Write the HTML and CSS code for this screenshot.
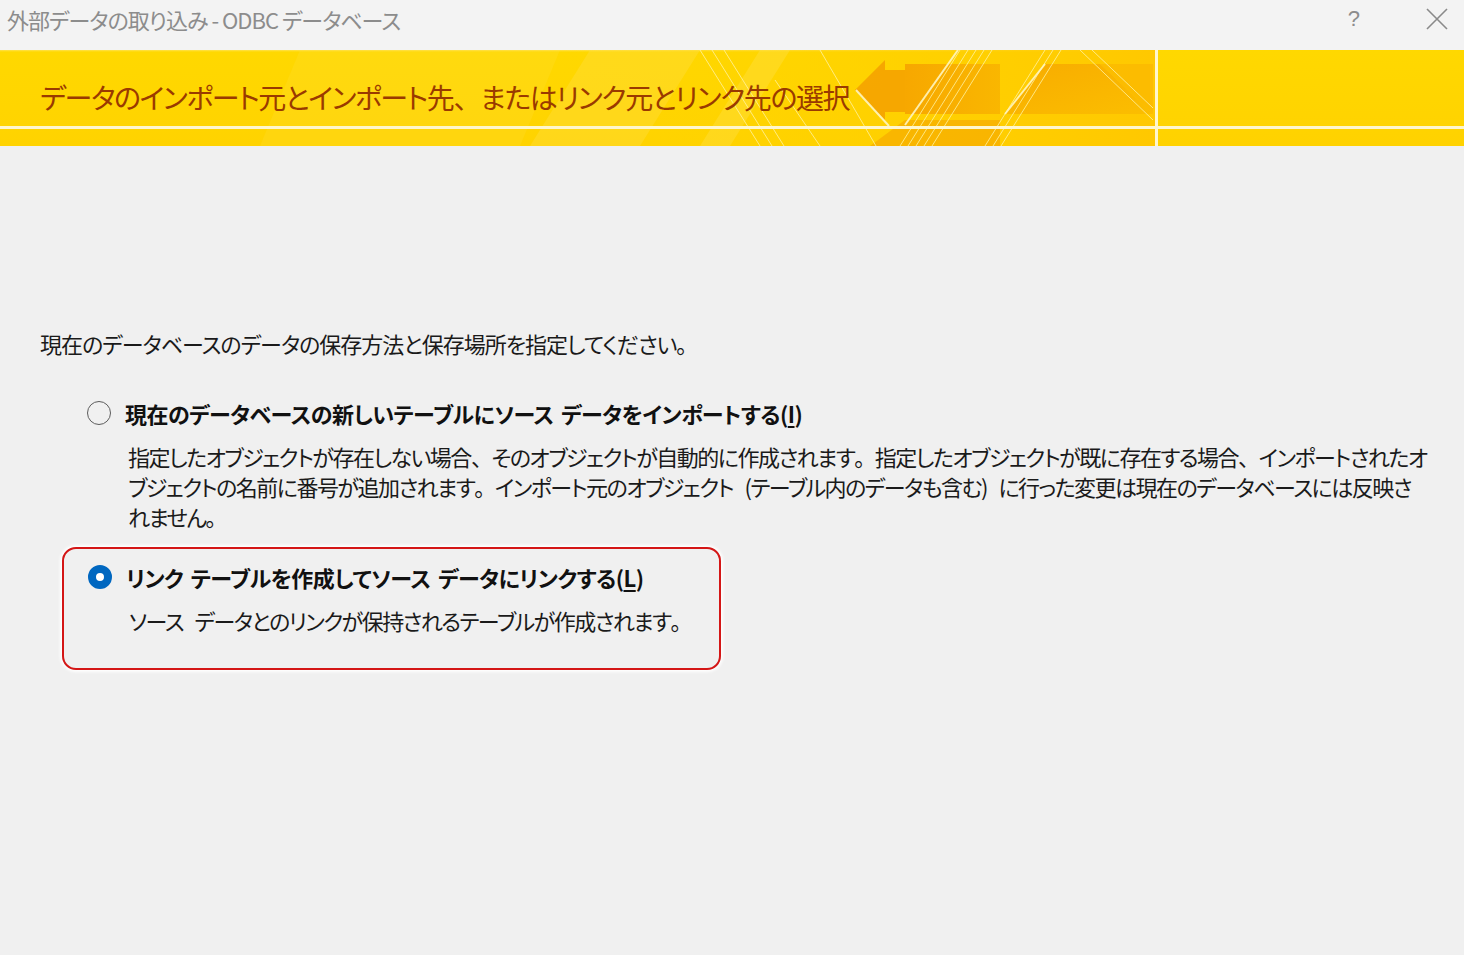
FILE: index.html
```html
<!DOCTYPE html>
<html lang="ja">
<head>
<meta charset="utf-8">
<title>外部データの取り込み - ODBC データベース</title>
<link rel="stylesheet" href="styles.css">
</head>
<body>
<div class="window">
  <header class="titlebar">
    <div class="title">外部データの取り込み - ODBC データベース</div>
    <div class="controls">
      <span class="help">?</span>
      <svg class="close" width="22" height="22" viewBox="0 0 22 22"><path d="M1 1 L21 21 M21 1 L1 21" stroke="#8a8a8a" stroke-width="1.6" fill="none"/></svg>
    </div>
  </header>

  <section class="banner">
    <div class="banner-main">
      <svg class="banner-deco" width="1155" height="96" viewBox="0 0 1155 96" preserveAspectRatio="none">
        <defs>
          <linearGradient id="og" x1="0" y1="0" x2="1" y2="0">
            <stop offset="0" stop-color="#f6a300"/>
            <stop offset="1" stop-color="#f9b400"/>
          </linearGradient>
          <linearGradient id="og2" x1="0" y1="0" x2="1" y2="1">
            <stop offset="0" stop-color="#f7a800"/>
            <stop offset="1" stop-color="#fbbd00"/>
          </linearGradient>
          <linearGradient id="fade" x1="0" y1="0" x2="1" y2="0">
            <stop offset="0" stop-color="#ffd500" stop-opacity="0"/>
            <stop offset="1" stop-color="#ffc800" stop-opacity="1"/>
          </linearGradient>
        </defs>
        <rect x="560" y="0" width="595" height="96" fill="url(#fade)"/>
        <polygon points="590,0 700,0 640,96 530,96" fill="#ffe04a" opacity="0.35"/>
        <polygon points="700,96 760,0 790,0 730,96" fill="#ffe55c" opacity="0.3"/>
        <polygon points="855,40 885,10 885,20 905,20 905,62 885,62 885,70" fill="#f5a000" opacity="0.85"/>
        <polygon points="905,14 1000,14 1000,64 905,64" fill="url(#og)" opacity="0.9"/>
        <polygon points="1005,64 1045,14 1100,14 1153,64" fill="url(#og2)" opacity="0.9"/>
        <polygon points="1100,14 1153,14 1153,64" fill="#fbb900" opacity="0.8"/>
        <polygon points="870,96 905,70 1000,70 1000,96" fill="#f7ab00" opacity="0.7"/>
        <polygon points="300,0 560,0 520,96 260,96" fill="#ffe34d" opacity="0.18"/>
        <g stroke="#fff3a0" stroke-width="1" opacity="0.8" fill="none">
          <line x1="700" y1="0" x2="760" y2="96"/>
          <line x1="712" y1="0" x2="772" y2="96"/>
          <line x1="724" y1="0" x2="784" y2="96"/>
          <line x1="775" y1="30" x2="820" y2="96"/>
          <line x1="820" y1="0" x2="876" y2="96"/>
          <line x1="960" y1="0" x2="900" y2="96"/>
          <line x1="968" y1="0" x2="908" y2="96"/>
          <line x1="976" y1="0" x2="916" y2="96"/>
          <line x1="984" y1="0" x2="924" y2="96"/>
          <line x1="992" y1="0" x2="932" y2="96"/>
          <line x1="1045" y1="0" x2="985" y2="96"/>
          <line x1="1053" y1="0" x2="993" y2="96"/>
          <line x1="1061" y1="0" x2="1001" y2="96"/>
          <line x1="1080" y1="0" x2="1153" y2="70"/>
          <line x1="1092" y1="0" x2="1153" y2="58"/>
        </g>
        <g stroke="#fff6c0" stroke-width="2" fill="none" opacity="0.9">
          <line x1="905" y1="75" x2="958" y2="0"/>
          <line x1="856" y1="40" x2="889" y2="76"/>
          <line x1="1005" y1="64" x2="1045" y2="14"/>
        </g>
      </svg>
      <h1 class="banner-title">データのインポート元とインポート先<span class="fw">、</span>またはリンク元とリンク先の選択</h1>
    </div>
    <div class="banner-divider"></div>
    <div class="banner-side"></div>
    <div class="banner-rule"></div>
  </section>

  <main class="content">
    <p class="intro">現在のデータベースのデータの保存方法と保存場所を指定してください<span class="fw">。</span></p>

    <div class="options">
      <div class="option">
        <div class="option-head">
          <span class="radio"></span>
          <span class="label">現在のデータベースの新しいテーブルにソース データをインポートする(<u>I</u>)</span>
        </div>
        <p class="desc">指定したオブジェクトが存在しない場合<span class="fw">、</span>そのオブジェクトが自動的に作成されます<span class="fw">。</span>指定したオブジェクトが既に存在する場合<span class="fw">、</span>インポートされたオブジェクトの名前に番号が追加されます<span class="fw">。</span>インポート元のオブジェクト (テーブル内のデータも含む) に行った変更は現在のデータベースには反映されません<span class="fw">。</span></p>
      </div>

      <div class="option option-highlight">
        <div class="option-head">
          <span class="radio radio-checked"></span>
          <span class="label">リンク テーブルを作成してソース データにリンクする(<u>L</u>)</span>
        </div>
        <p class="desc">ソース データとのリンクが保持されるテーブルが作成されます<span class="fw">。</span></p>
      </div>
    </div>
  </main>
</div>
</body>
</html>
```

FILE: styles.css
```css
html, body {
  margin: 0;
  padding: 0;
}
body {
  background: #f0f0f0;
  font-family: "Noto Sans CJK JP", "Noto Sans", sans-serif;
  font-feature-settings: "palt";
  color: #1a1a1a;
}
.fw {
  font-feature-settings: normal;
}
.window {
  width: 1464px;
  height: 955px;
  overflow: hidden;
  background: #f0f0f0;
}
.titlebar {
  height: 50px;
  display: flex;
  align-items: flex-start;
  justify-content: space-between;
  background: #f3f3f3;
}
.title {
  margin: 4px 0 0 7px;
  font-size: 22px;
  line-height: 30px;
  color: #8c8c8c;
  letter-spacing: -1px;
}
.controls {
  display: flex;
  align-items: center;
  gap: 66px;
  margin: 6px 16px 0 0;
}
.help {
  font-family: "Liberation Sans", sans-serif;
  font-size: 22px;
  line-height: 26px;
  color: #8c8c8c;
}
.close {
  display: block;
}

.banner {
  position: relative;
  height: 96px;
  display: flex;
  background: linear-gradient(180deg, #ffe24a 0px, #ffd800 2px, #ffd300 100%);
}
.banner-main {
  position: relative;
  width: 1155px;
  overflow: hidden;
}
.banner-deco {
  position: absolute;
  left: 0;
  top: 0;
}
.banner-title {
  position: relative;
  margin: 0;
  padding: 28px 0 0 40px;
  font-weight: normal;
  font-size: 28px;
  line-height: 38px;
  color: #9a3a00;
  letter-spacing: -1.4px;
}
.banner-divider {
  width: 3px;
  background: #fff6cc;
}
.banner-side {
  flex: 1;
  background: linear-gradient(180deg, #ffd800, #ffd200);
}
.banner-rule {
  position: absolute;
  left: 0;
  right: 0;
  top: 76px;
  height: 3px;
  background: #fff6cc;
}

.content {
  padding: 0 0 0 40px;
}
.intro {
  margin: 182px 0 0 0;
  font-size: 22px;
  line-height: 30px;
  letter-spacing: -1px;
  color: #1a1a1a;
}
.options {
  margin: 40px 0 0 22px;
  width: 1380px;
}
.option {
  padding-left: 25px;
}
.option-head {
  display: flex;
  align-items: center;
  gap: 14px;
  height: 30px;
}
.radio {
  box-sizing: border-box;
  width: 24px;
  height: 24px;
  border-radius: 50%;
  border: 1.6px solid #5c5c5c;
  flex: none;
}
.radio-checked {
  border: 8px solid #0067c0;
  background: #fff;
}
.label {
  font-size: 22px;
  line-height: 30px;
  font-weight: bold;
  letter-spacing: -0.5px;
  word-spacing: 3px;
  color: #111;
}
.label u {
  text-decoration-thickness: 1.5px;
  text-underline-offset: 3px;
}
.desc {
  margin: 13px 0 0 41px;
  font-size: 22px;
  line-height: 30px;
  letter-spacing: -1.5px;
  word-spacing: 8px;
  color: #1a1a1a;
  width: 1302px;
}
.option-highlight {
  box-sizing: border-box;
  width: 659px;
  margin-top: 16px;
  border: 2px solid #d41616;
  border-radius: 14px;
  padding: 13px 0 33px 24px;
  box-shadow: 0 0 3px 2px rgba(255, 255, 255, 0.95);
}
```
